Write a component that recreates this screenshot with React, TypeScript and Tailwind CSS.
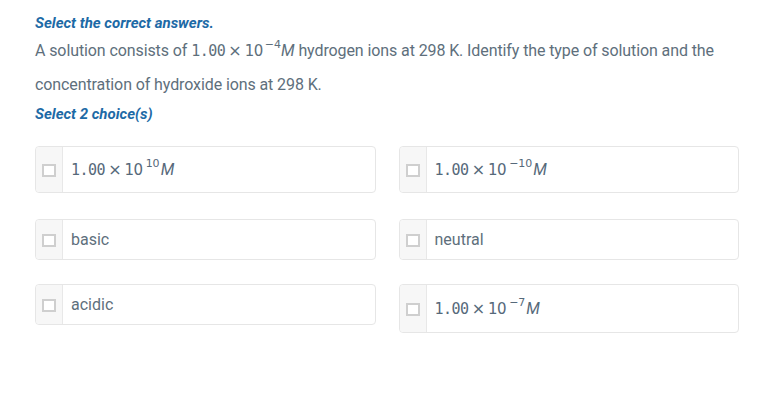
import React from "react";

const Sci = ({ exp }: { exp: string }) => (
  <span className="inline-flex items-baseline text-[#56697a]">
    <span style={{ fontFamily: '"DejaVu Sans Mono", monospace' }} className="text-[15px] tracking-[-0.5px]">1.00</span>
    <span className="mx-[3px] text-[16px]" style={{ fontFamily: '"DejaVu Sans", sans-serif' }}>×</span>
    <span className="text-[15px]" style={{ fontFamily: '"DejaVu Sans", sans-serif', letterSpacing: "-0.5px" }}>10</span>
    <span className="relative -top-[8px] text-[11px] ml-[3px]" style={{ fontFamily: '"DejaVu Sans", sans-serif' }}>{exp}</span>
    <span className="italic text-[16px] ml-[1px]" style={{ fontFamily: '"Roboto", sans-serif' }}>M</span>
  </span>
);

const Card = ({ children, h }: { children: React.ReactNode; h: string }) => (
  <div className={`flex rounded-[4px] border border-[#e6e6e6] bg-white ${h}`}>
    <div className="flex w-[27px] shrink-0 items-center justify-center rounded-l-[4px] border-r border-[#e8e8e8] bg-[#f7f7f7]">
      <div className="mt-[2px] h-[13px] w-[14px] border-2 border-[#cfcfcf] bg-white" />
    </div>
    <div className="flex items-center pl-[8px] text-[16px] text-[#5e6f7c]">{children}</div>
  </div>
);

export default function App() {
  return (
    <div className="w-[783px] h-[407px] bg-white pl-[35px] pt-[13px]" style={{ fontFamily: '"Roboto", sans-serif' }}>
      <div className="text-[15px] leading-[20px] font-bold italic text-[#1d6aa6]">Select the correct answers.</div>
      <div className="mt-[2px] text-[16px] leading-[32px] text-[#5e6f7c] tracking-[-0.1px]">
        A solution consists of <span className="tracking-normal"><span style={{ fontFamily: '"DejaVu Sans Mono", monospace' }} className="text-[15px] tracking-[-0.5px]">1.00</span>
        <span className="mx-[3px]" style={{ fontFamily: '"DejaVu Sans", sans-serif' }}>×</span>
        <span className="text-[15px]" style={{ fontFamily: '"DejaVu Sans", sans-serif', letterSpacing: "-0.5px" }}>10</span>
        <span className="relative -top-[8px] text-[11px] ml-[2px]" style={{ fontFamily: '"DejaVu Sans", sans-serif' }}>−4</span>
        <span className="italic">M</span></span> hydrogen ions at 298 K. Identify the type of solution and the
        <br />
        concentration of hydroxide ions at 298 K.
      </div>
      <div className="text-[15px] leading-[20px] mt-[3px] font-bold italic text-[#1d6aa6]">Select 2 choice(s)</div>
      <div className="mt-[22px] flex w-[704px] flex-col">
        <div className="grid grid-cols-2 items-start gap-x-[23px]">
          <Card h="h-[47px]"><Sci exp="10" /></Card>
          <Card h="h-[47px]"><Sci exp="−10" /></Card>
        </div>
        <div className="mt-[26px] grid grid-cols-2 items-start gap-x-[23px]">
          <Card h="h-[41px]">basic</Card>
          <Card h="h-[41px]">neutral</Card>
        </div>
        <div className="mt-[24px] grid grid-cols-2 items-start gap-x-[23px]">
          <Card h="h-[41px]">acidic</Card>
          <Card h="h-[49px]"><Sci exp="−7" /></Card>
        </div>
      </div>
    </div>
  );
}
